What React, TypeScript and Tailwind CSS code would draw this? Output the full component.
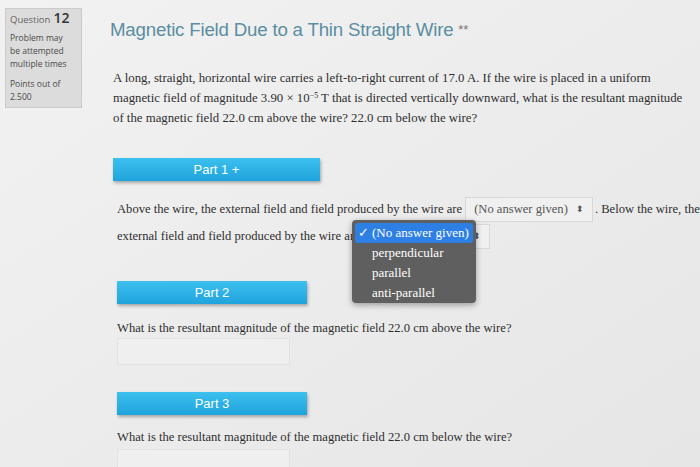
const serif = { fontFamily: '"Liberation Serif", "Times New Roman", serif' };

const PartBar = ({ label, width }: { label: string; width: string }) => (
  <div
    className={`${width} h-[23px] flex items-center justify-center text-white text-[13px] bg-gradient-to-b from-[#3cc0ee] to-[#1ea3dc] shadow-[1px_2px_3px_rgba(0,0,0,0.3)]`}
    style={{ fontFamily: '"Liberation Sans", Arial, sans-serif' }}
  >
    {label}
  </div>
);

const SelectBox = ({ className = "" }: { className?: string }) => (
  <span
    className={`inline-flex items-center h-[25px] px-[8px] border border-[#d8d8d8] bg-[#f0f0f0] text-[#555] align-middle ${className}`}
  >
    (No answer given)
    <span className="ml-[8px] text-[9px] leading-none">&#x2B0D;</span>
  </span>
);

export default function App() {
  return (
    <div
      className="w-[700px] h-[467px] overflow-hidden flex bg-gradient-to-br from-[#f2f2f2] via-[#ececec] to-[#e6e6e6]"
      style={{ fontFamily: '"Open Sans", Arial, sans-serif' }}
    >
      <aside className="ml-[5px] mt-[8px] w-[77px] h-[100px] shrink-0 bg-[#dcdcdc] border border-[#cacaca] px-[4px] text-[#4a4a4a]">
        <div className="flex items-baseline gap-[3px] leading-[18px]">
          <span className="text-[9.5px] text-[#666]">Question</span>
          <span className="text-[14px] font-semibold text-[#333]">12</span>
        </div>
        <div className="mt-[2px] text-[8.5px] leading-[13px]">
          Problem may
          <br />
          be attempted
          <br />
          multiple times
        </div>
        <div className="mt-[7px] text-[8.5px] leading-[13px]">
          Points out of
          <br />
          2.500
        </div>
      </aside>

      <main className="ml-[28px] pt-[17px] flex-1 min-w-0">
        <h1
          className="text-[18.7px] leading-[26px] text-[#5a8ea2] tracking-[-0.2px]"
          style={{ fontFamily: '"Liberation Sans", Arial, sans-serif' }}
        >
          Magnetic Field Due to a Thin Straight Wire <span className="text-[13px] align-top text-[#777]">**</span>
        </h1>

        <p className="mt-[25px] ml-[3px] text-[12.8px] leading-[20px] text-[#2f2f2f] whitespace-nowrap" style={serif}>
          A long, straight, horizontal wire carries a left-to-right current of 17.0 A. If the wire is placed in a uniform
          <br />
          magnetic field of magnitude 3.90 × 10<sup className="text-[8px]">−5</sup> T that is directed vertically downward,
          what is the resultant magnitude
          <br />
          of the magnetic field 22.0 cm above the wire? 22.0 cm below the wire?
        </p>

        <div className="mt-[30px] ml-[3px]">
          <PartBar label="Part 1 +" width="w-[207px]" />
        </div>

        <div className="relative mt-[15px] ml-[7px] text-[12.6px] text-[#2f2f2f]" style={serif}>
          <div className="h-[27px] flex items-center whitespace-nowrap">
            Above the wire, the external field and field produced by the wire are
            <SelectBox className="ml-[3px] mr-[2px]" />. Below the wire, the
          </div>
          <div className="h-[27px] flex items-center whitespace-nowrap">
            external field and field produced by the wire are
            <SelectBox className="ml-[3px]" />
          </div>

          <div
            className="absolute left-[235px] top-[24px] w-[124px] h-[83px] rounded-[4px] bg-[#5f5f5f] shadow-[0_2px_6px_rgba(0,0,0,0.35)] p-[3px] text-white text-[13px]"
            style={serif}
          >
            <div className="h-[20px] flex items-center rounded-[3px] bg-[#2e7fe3] px-[3px] whitespace-nowrap">
              <span className="mr-[3px]">✓</span>(No answer given)
            </div>
            <div className="h-[20px] flex items-center pl-[17px]">perpendicular</div>
            <div className="h-[20px] flex items-center pl-[17px]">parallel</div>
            <div className="h-[20px] flex items-center pl-[17px]">anti-parallel</div>
          </div>
        </div>

        <div className="mt-[31px] ml-[7px]">
          <PartBar label="Part 2" width="w-[190px]" />
        </div>

        <p className="mt-[15px] ml-[7px] text-[12.6px] leading-[18px] text-[#2f2f2f]" style={serif}>
          What is the resultant magnitude of the magnetic field 22.0 cm above the wire?
        </p>
        <div className="mt-[1px] ml-[7px] w-[173px] h-[27px] border border-[#e2e2e2] bg-[#efefef]" />

        <div className="mt-[27px] ml-[7px]">
          <PartBar label="Part 3" width="w-[190px]" />
        </div>

        <p className="mt-[13px] ml-[7px] text-[12.6px] leading-[18px] text-[#2f2f2f]" style={serif}>
          What is the resultant magnitude of the magnetic field 22.0 cm below the wire?
        </p>
        <div className="mt-[3px] ml-[7px] w-[173px] h-[27px] border border-[#e2e2e2] bg-[#efefef]" />
      </main>
    </div>
  );
}
